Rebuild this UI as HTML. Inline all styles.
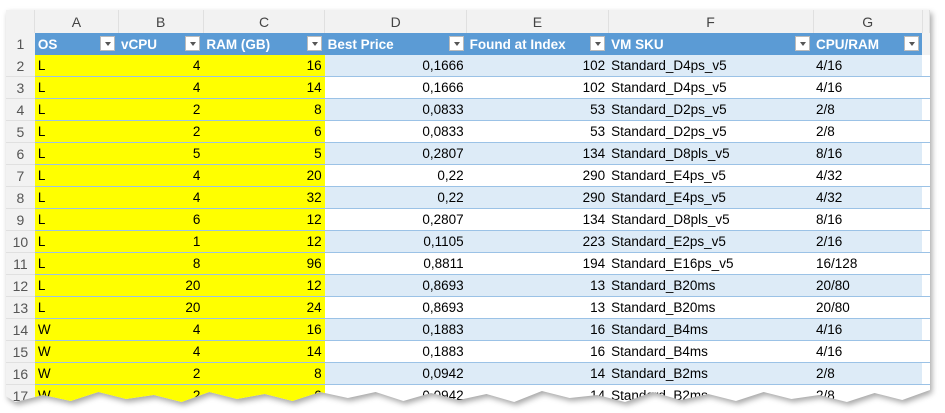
<!DOCTYPE html>
<html><head><style>
body{margin:0;width:945px;height:413px;background:#fff;overflow:hidden;font-family:"Liberation Sans",sans-serif;}
.wrap{position:absolute;left:6px;top:10px;filter:drop-shadow(2px 3px 3px rgba(0,0,0,.35));}
.sheet{width:924px;height:400px;background:#fff;overflow:hidden;position:relative;
clip-path:polygon(0 0,100% 0,100% 380px,97% 390px,94% 383px,91% 392px,88% 385px,85% 389px,82% 382px,79% 391px,76% 384px,73% 390px,70% 382px,67% 392px,64% 385px,61% 388px,58% 381px,55% 392px,52% 384px,49% 390px,46% 383px,43% 391px,40% 382px,37% 388px,34% 382px,31% 391px,28% 384px,25% 389px,22% 382px,19% 392px,16% 385px,13% 389px,10% 382px,7% 391px,4% 385px,1% 392px,0 386px);}
table{border-collapse:collapse;table-layout:fixed;font-size:13.5px;}
td{height:21px;padding:0 3px;white-space:nowrap;overflow:hidden;border-bottom:1px solid #9BC2E6;}
.ch td{background:#f2f2f2;color:#444;text-align:center;border:none;border-right:1px solid #e0e0e0;height:23px;font-size:14px;}
td.rh{background:#f2f2f2;color:#555;text-align:center;border:none;border-bottom:1px solid #e0e0e0;font-size:14px;padding:0;font-weight:normal;}
.hd td{background:#5B9BD5;color:#fff;font-weight:bold;position:relative;border-bottom:none;height:22px}
.hd td.rh{background:#f2f2f2;color:#555;font-weight:normal}
.hd td span.b{position:absolute;right:3px;top:3px;width:15px;height:15px;background:#fff;border:1px solid #bbb;box-sizing:border-box}
.hd td span.b:after{content:"";position:absolute;left:4px;top:5px;border:3px solid transparent;border-top:4px solid #555}
.y{background:#ff0;}
.r{text-align:right}
tr.o td.n{background:#DDEBF7}
</style></head><body>
<div class="wrap"><div class="sheet">
<table>
<colgroup><col style="width:29px"><col style="width:84px"><col style="width:86px"><col style="width:122px"><col style="width:143px"><col style="width:142px"><col style="width:206px"><col style="width:110px"><col style="width:2px"></colgroup>
<tr class="ch"><td></td><td>A</td><td>B</td><td>C</td><td>D</td><td>E</td><td>F</td><td>G</td><td></td></tr>
<tr class="hd"><td class="rh">1</td><td>OS<span class="b"></span></td><td>vCPU<span class="b"></span></td><td>RAM (GB)<span class="b"></span></td><td>Best Price<span class="b"></span></td><td>Found at Index<span class="b"></span></td><td>VM SKU<span class="b"></span></td><td>CPU/RAM<span class="b"></span></td><td class="rh"></td></tr>
<tr class="o"><td class="rh">2</td><td class="y">L</td><td class="y r">4</td><td class="y r">16</td><td class="n r">0,1666</td><td class="n r">102</td><td class="n">Standard_D4ps_v5</td><td class="n">4/16</td><td></td></tr>
<tr><td class="rh">3</td><td class="y">L</td><td class="y r">4</td><td class="y r">14</td><td class="n r">0,1666</td><td class="n r">102</td><td class="n">Standard_D4ps_v5</td><td class="n">4/16</td><td></td></tr>
<tr class="o"><td class="rh">4</td><td class="y">L</td><td class="y r">2</td><td class="y r">8</td><td class="n r">0,0833</td><td class="n r">53</td><td class="n">Standard_D2ps_v5</td><td class="n">2/8</td><td></td></tr>
<tr><td class="rh">5</td><td class="y">L</td><td class="y r">2</td><td class="y r">6</td><td class="n r">0,0833</td><td class="n r">53</td><td class="n">Standard_D2ps_v5</td><td class="n">2/8</td><td></td></tr>
<tr class="o"><td class="rh">6</td><td class="y">L</td><td class="y r">5</td><td class="y r">5</td><td class="n r">0,2807</td><td class="n r">134</td><td class="n">Standard_D8pls_v5</td><td class="n">8/16</td><td></td></tr>
<tr><td class="rh">7</td><td class="y">L</td><td class="y r">4</td><td class="y r">20</td><td class="n r">0,22</td><td class="n r">290</td><td class="n">Standard_E4ps_v5</td><td class="n">4/32</td><td></td></tr>
<tr class="o"><td class="rh">8</td><td class="y">L</td><td class="y r">4</td><td class="y r">32</td><td class="n r">0,22</td><td class="n r">290</td><td class="n">Standard_E4ps_v5</td><td class="n">4/32</td><td></td></tr>
<tr><td class="rh">9</td><td class="y">L</td><td class="y r">6</td><td class="y r">12</td><td class="n r">0,2807</td><td class="n r">134</td><td class="n">Standard_D8pls_v5</td><td class="n">8/16</td><td></td></tr>
<tr class="o"><td class="rh">10</td><td class="y">L</td><td class="y r">1</td><td class="y r">12</td><td class="n r">0,1105</td><td class="n r">223</td><td class="n">Standard_E2ps_v5</td><td class="n">2/16</td><td></td></tr>
<tr><td class="rh">11</td><td class="y">L</td><td class="y r">8</td><td class="y r">96</td><td class="n r">0,8811</td><td class="n r">194</td><td class="n">Standard_E16ps_v5</td><td class="n">16/128</td><td></td></tr>
<tr class="o"><td class="rh">12</td><td class="y">L</td><td class="y r">20</td><td class="y r">12</td><td class="n r">0,8693</td><td class="n r">13</td><td class="n">Standard_B20ms</td><td class="n">20/80</td><td></td></tr>
<tr><td class="rh">13</td><td class="y">L</td><td class="y r">20</td><td class="y r">24</td><td class="n r">0,8693</td><td class="n r">13</td><td class="n">Standard_B20ms</td><td class="n">20/80</td><td></td></tr>
<tr class="o"><td class="rh">14</td><td class="y">W</td><td class="y r">4</td><td class="y r">16</td><td class="n r">0,1883</td><td class="n r">16</td><td class="n">Standard_B4ms</td><td class="n">4/16</td><td></td></tr>
<tr><td class="rh">15</td><td class="y">W</td><td class="y r">4</td><td class="y r">14</td><td class="n r">0,1883</td><td class="n r">16</td><td class="n">Standard_B4ms</td><td class="n">4/16</td><td></td></tr>
<tr class="o"><td class="rh">16</td><td class="y">W</td><td class="y r">2</td><td class="y r">8</td><td class="n r">0,0942</td><td class="n r">14</td><td class="n">Standard_B2ms</td><td class="n">2/8</td><td></td></tr>
<tr><td class="rh">17</td><td class="y">W</td><td class="y r">2</td><td class="y r">6</td><td class="n r">0,0942</td><td class="n r">14</td><td class="n">Standard_B2ms</td><td class="n">2/8</td><td></td></tr>
</table>
</div></div>
</body></html>
